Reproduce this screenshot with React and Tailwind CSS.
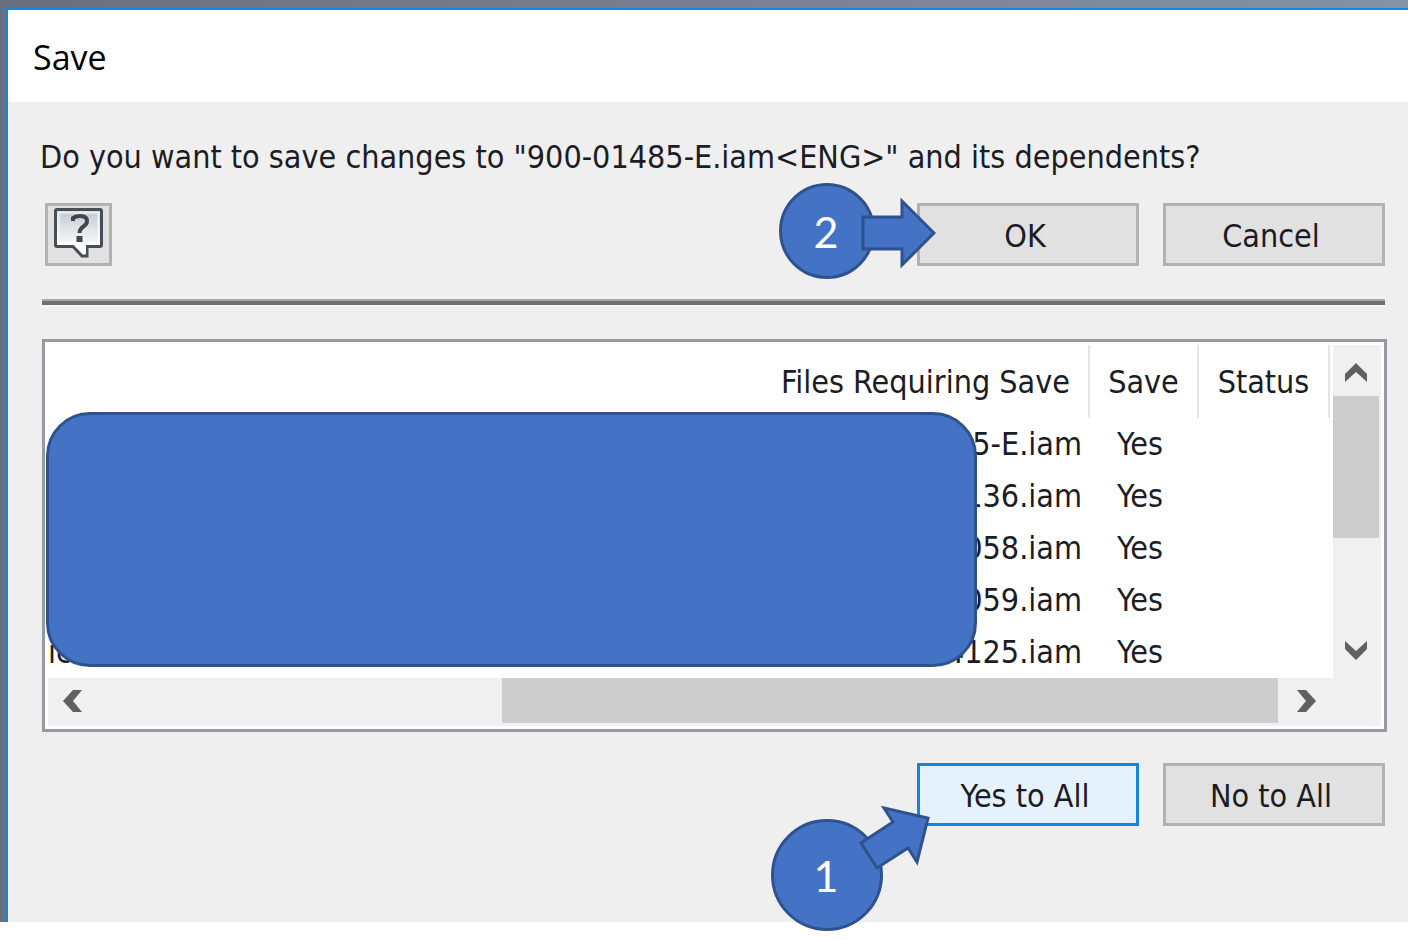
const files = [
  { name: "5-E.iam", save: "Yes" },
  { name: "136.iam", save: "Yes" },
  { name: "058.iam", save: "Yes" },
  { name: "059.iam", save: "Yes" },
  { name: "4125.iam", prefix: "ic", save: "Yes" },
];

const Arrow = ({ points, className }) => (
  <svg viewBox="0 0 22 22" className={className} fill="#606060" aria-hidden="true">
    <polygon points={points} />
  </svg>
);

const DialogButton = ({ children, primary }) => (
  <button
    type="button"
    className={
      primary
        ? "h-[63px] w-[222px] border-3 border-[#1883d7] bg-[#e5f1fb] pt-[2px] pr-1.5 text-center"
        : "h-[63px] w-[222px] border-3 border-[#b2b2b2] bg-[#e1e1e1] pt-[2px] pr-1.5 text-center"
    }
  >
    {children}
  </button>
);

const HelpIcon = () => (
  <svg viewBox="0 0 50 50" className="h-[50px] w-[50px]" aria-hidden="true">
    <defs>
      <linearGradient id="bubble" x1="0" y1="0" x2="0" y2="1">
        <stop offset="0" stopColor="#c3c8d0" />
        <stop offset="0.8" stopColor="#fbfbfc" />
      </linearGradient>
    </defs>
    <path
      d="M3 1.5H46Q47.500 1.500 47.500 3V37Q47.500 38.500 46 38.500H33V48H28L19 38.500H3Q1.500 38.500 1.500 37V3Q1.500 1.500 3 1.500Z"
      fill="url(#bubble)"
      stroke="#484e57"
      strokeWidth="3"
    />
    <path d="M4.500 4.500H44.500V35.500H4.500Z" fill="none" stroke="#fff" strokeOpacity="0.7" strokeWidth="2" />
    <path d="M20 36H32V46H29Z" fill="#fff" />
    <path
      d="M19 13V10Q22 8 26 8Q33 8 33 13Q33 16 30 18Q25.500 21 25.500 25"
      fill="none"
      stroke="#40464f"
      strokeWidth="4"
    />
    <path d="M22.500 28H28.500V34H22.500Z" fill="#40464f" />
  </svg>
);

const CalloutTwo = () => (
  <svg viewBox="0 0 158 98" className="pointer-events-none absolute -top-[21px] -left-[139px] h-[98px] w-[158px]">
    <g fill="#4472c4" stroke="#2f528f" strokeWidth="3">
      <circle cx="49" cy="49" r="46.500" />
      <path d="M85 35H124V19L156 51L124 83V67H85Z" />
    </g>
    <text x="48" y="66" textAnchor="middle" fill="#fff" fontFamily="Lato, sans-serif" fontSize="43">2</text>
  </svg>
);

const CalloutOne = () => (
  <svg viewBox="0 0 162 128" className="pointer-events-none absolute top-[42px] -left-[147px] h-[128px] w-[162px]">
    <g fill="#4472c4" stroke="#2f528f" strokeWidth="3">
      <circle cx="57" cy="70" r="54.500" />
      <path d="M114 3L158 13L147 57L138 43L107 63L91 38L123 17Z" />
    </g>
    <text x="56" y="87" textAnchor="middle" fill="#fff" fontFamily="Lato, sans-serif" fontSize="43">1</text>
  </svg>
);

const FileList = () => (
  <div className="relative mt-[34px] ml-[2px] border-3 border-[#9599a1] bg-white p-[3px]">
    <div className="flex">
      <table className="flex-1 table-fixed border-collapse">
        <thead>
          <tr className="h-[73px]">
            <th className="border-r-2 border-[#e5e5e5] pr-[18px] text-right font-normal">Files Requiring Save</th>
            <th className="w-[109px] border-r-2 border-[#e5e5e5] font-normal">Save</th>
            <th className="w-[131px] border-r-2 border-[#e5e5e5] font-normal">Status</th>
            <th className="w-1"></th>
          </tr>
        </thead>
        <tbody>
          {files.map((file) => (
            <tr key={file.name} className="h-[52px]">
              <td className="p-0 pr-[7px]">
                <div className="flex justify-between">
                  <span>{file.prefix}</span>
                  <span>{file.name}</span>
                </div>
              </td>
              <td className="p-0 pl-7">{file.save}</td>
              <td></td>
              <td></td>
            </tr>
          ))}
        </tbody>
      </table>
      <div className="flex w-12 flex-col bg-[#f0f0f0] pr-[2px]">
        <button type="button" aria-label="Scroll up" className="flex h-[51px] items-center justify-center pt-1">
          <Arrow points="11,1 22,12 22,20 11,10 0,20 0,12" className="h-[22px] w-[22px]" />
        </button>
        <div className="h-[142px] bg-[#cdcdcd]"></div>
        <div className="flex-1"></div>
        <button type="button" aria-label="Scroll down" className="flex h-[52px] items-center justify-center pb-1">
          <Arrow points="11,21 22,10 22,2 11,12 0,2 0,10" className="h-[22px] w-[22px]" />
        </button>
      </div>
    </div>
    <div className="flex h-12 bg-[#f0f0f0] pr-12 pb-[3px]">
      <button type="button" aria-label="Scroll left" className="flex w-[50px] items-center justify-center">
        <Arrow points="1,11 11,0 20,0 11,11 20,22 11,22" className="h-[22px] w-[22px]" />
      </button>
      <div className="flex flex-1 pl-[404px]">
        <div className="flex-1 bg-[#cdcdcd]"></div>
      </div>
      <button type="button" aria-label="Scroll right" className="flex w-[55px] items-center justify-center">
        <Arrow points="21,11 11,0 2,0 11,11 2,22 11,22" className="h-[22px] w-[22px]" />
      </button>
    </div>
    <div className="absolute top-[70px] right-[407px] left-px h-[255px] rounded-[44px] border-3 border-[#2f528f] bg-[#4472c4]"></div>
  </div>
);

const App = () => {
  return (
    <div className="flex min-h-screen flex-col bg-white pb-[18px]">
      <div className="flex flex-1 flex-col bg-linear-to-r from-[#68707f] to-[#8791a5] pt-2 pl-1.5">
        <main className="flex flex-1 flex-col border-t-2 border-l-2 border-[#1883d7] bg-[#efefef] text-[32px] leading-10 text-[#1c1c24] [font-family:'DejaVu_Sans_Condensed','DejaVu_Sans',sans-serif]">
          <header className="flex h-[92px] items-center bg-white pt-[2px] pl-[25px]">
            <h1 className="text-[34px] text-black [font-family:'Open_Sans',sans-serif]">Save</h1>
          </header>
          <div className="pr-[21px] pl-8">
            <p className="mt-[35px] whitespace-nowrap">
              Do you want to save changes to "900-01485-E.iam&lt;ENG&gt;" and its dependents?
            </p>
            <div className="mt-[26px] flex gap-6 pr-[2px] pl-[5px]">
              <button
                type="button"
                aria-label="Help"
                className="mr-auto flex h-[63px] w-[67px] justify-center border-3 border-[#b2b2b2] bg-[#e1e1e1] pt-[2px]"
              >
                <HelpIcon />
              </button>
              <div className="relative">
                <DialogButton>OK</DialogButton>
                <CalloutTwo />
              </div>
              <DialogButton>Cancel</DialogButton>
            </div>
            <div className="mt-[33px] mr-[2px] ml-[2px] h-[6px] border-t-2 border-[#a8a8a8] bg-[#707070] shadow-[0_2px_0_#f8f8f8]"></div>
            <FileList />
            <div className="mt-[31px] flex justify-end gap-6 pr-[2px]">
              <div className="relative">
                <DialogButton primary>Yes to All</DialogButton>
                <CalloutOne />
              </div>
              <DialogButton>No to All</DialogButton>
            </div>
          </div>
        </main>
      </div>
    </div>
  );
};

export default App;
